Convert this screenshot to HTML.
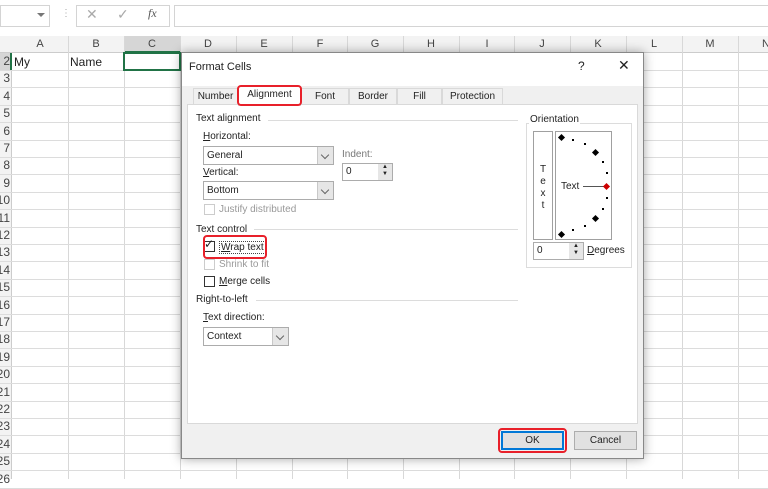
<!DOCTYPE html>
<html><head><style>
*{box-sizing:border-box;margin:0;padding:0}
body{width:768px;height:479px;overflow:hidden;background:#fff;font-family:"Liberation Sans",sans-serif;position:relative;font-size:11px;color:#222}
.a{position:absolute}
.vl{position:absolute;top:36px;bottom:0;width:1px;background:#d8d8d8}
.hl{position:absolute;left:0;right:0;height:1px;background:#dcdcdc}
.ch{position:absolute;top:36px;height:17px;font-size:11px;color:#444;text-align:center;line-height:17px}
.rh{position:absolute;left:0;width:11px;height:17px;font-size:12px;color:#444;overflow:hidden}
.rh span{position:absolute;right:1px;top:1px;white-space:nowrap}
.dlg{position:absolute;left:181px;top:52px;width:463px;height:407px;background:#f0f0f0;border:1px solid #888;box-shadow:0 0 10px rgba(0,0,0,.35)}
.t{font-size:10px;color:#222;position:absolute;white-space:nowrap}
.sel{position:absolute;background:#fff;border:1px solid #acacac;height:19px}
.arr{position:absolute;right:0;top:0;width:16px;height:17px;background:#e6e6e6;border-left:1px solid #c8c8c8}
.arr:after{content:"";position:absolute;left:4px;top:5px;width:5px;height:5px;border-right:1px solid #666;border-bottom:1px solid #666;transform:rotate(45deg)}
.cb{position:absolute;width:11px;height:11px;border:1px solid #333;background:#fff}
.sep{position:absolute;height:1px;background:#dcdcdc}
.tab{position:absolute;top:35px;height:17px;border:1px solid #d9d9d9;border-bottom:none;background:#f0f0f0;font-size:10px;text-align:center;line-height:16px}
.dot{position:absolute;width:2px;height:2px;background:#000}
.dia{position:absolute;width:5px;height:5px;background:#000;transform:rotate(45deg)}
</style></head><body>
<div class="a" style="left:0;top:0;width:768px;height:33px;background:#fff"></div>
<div class="a" style="left:0;top:5px;width:50px;height:22px;border:1px solid #d4d4d4;background:#fff"></div>
<div class="a" style="left:37px;top:13px;border:4px solid transparent;border-top:4px solid #777"></div>
<div class="a" style="left:61px;top:8px;color:#aaa;font-size:10px">⋮</div>
<div class="a" style="left:76px;top:5px;width:94px;height:22px;border:1px solid #d4d4d4"></div>
<div class="a" style="left:86px;top:6px;color:#aaa;font-size:14px">✕</div>
<div class="a" style="left:117px;top:6px;color:#aaa;font-size:14px">✓</div>
<div class="a" style="left:148px;top:6px;color:#555;font-size:12px;font-style:italic;font-family:'Liberation Serif',serif">fx</div>
<div class="a" style="left:174px;top:5px;width:600px;height:22px;border:1px solid #d4d4d4"></div>
<div class="a" style="left:0;top:36px;width:768px;height:17px;background:#f3f3f3;border-bottom:1px solid #ccc"></div>
<div class="a" style="left:124px;top:36px;width:56px;height:17px;background:#d6d6d6;border-bottom:2px solid #217346"></div>
<div class="a" style="left:0;top:53px;width:12px;height:426px;background:#f3f3f3;border-right:1px solid #ccc"></div>
<div class="a" style="left:0;top:53px;width:12px;height:17px;background:#d6d6d6;border-right:2px solid #217346"></div>
<div class="ch" style="left:12px;width:56px">A</div><div class="ch" style="left:68px;width:56px">B</div><div class="ch" style="left:124px;width:56px">C</div><div class="ch" style="left:180px;width:56px">D</div><div class="ch" style="left:236px;width:56px">E</div><div class="ch" style="left:292px;width:56px">F</div><div class="ch" style="left:347px;width:56px">G</div><div class="ch" style="left:403px;width:56px">H</div><div class="ch" style="left:459px;width:56px">I</div><div class="ch" style="left:514px;width:56px">J</div><div class="ch" style="left:570px;width:56px">K</div><div class="ch" style="left:626px;width:56px">L</div><div class="ch" style="left:682px;width:56px">M</div><div class="ch" style="left:738px;width:56px">N</div>
<div class="vl" style="left:68px"></div><div class="vl" style="left:124px"></div><div class="vl" style="left:180px"></div><div class="vl" style="left:236px"></div><div class="vl" style="left:292px"></div><div class="vl" style="left:347px"></div><div class="vl" style="left:403px"></div><div class="vl" style="left:459px"></div><div class="vl" style="left:514px"></div><div class="vl" style="left:570px"></div><div class="vl" style="left:626px"></div><div class="vl" style="left:682px"></div><div class="vl" style="left:738px"></div>
<div id="rows"></div>
<script>
var r='';for(var i=0;i<25;i++){var y=53+i*17.4;r+='<div class="hl" style="top:'+(y+17).toFixed(1)+'px"></div><div class="rh" style="top:'+(y).toFixed(1)+'px"><span>'+(i+2)+'</span></div>';}
document.getElementById('rows').innerHTML=r;
</script>
<div class="a" style="left:14px;top:55px;font-size:12px">My</div>
<div class="a" style="left:70px;top:55px;font-size:12px">Name</div>
<div class="a" style="left:123px;top:52px;width:58px;height:19px;border:2px solid #217346"></div>
<div class="dlg">
<div class="a" style="left:0;top:0;width:461px;height:33px;background:#fff"></div>
<div class="t" style="left:7px;top:8px;font-size:11px">Format Cells</div>
<div class="t" style="left:396px;top:6px;font-size:12px">?</div>
<div class="t" style="left:436px;top:4px;font-size:14px">✕</div>
<div class="tab" style="left:11px;width:45px">Number</div>
<div class="tab" style="left:56px;width:63px;top:33px;height:20px;background:#fff;z-index:2">Alignment</div>
<div class="tab" style="left:119px;width:48px">Font</div>
<div class="tab" style="left:167px;width:48px">Border</div>
<div class="tab" style="left:215px;width:45px">Fill</div>
<div class="tab" style="left:260px;width:61px">Protection</div>
<div class="a" style="left:55px;top:32px;width:65px;height:21px;border:2px solid #e8202a;border-radius:4px;z-index:3"></div>
<div class="a" style="left:5px;top:51px;width:451px;height:320px;background:#fff;border:1px solid #d9d9d9"></div>
<div class="t" style="left:14px;top:60px">Text alignment</div><div class="sep" style="left:86px;top:67px;width:250px"></div>
<div class="t" style="left:21px;top:78px"><u>H</u>orizontal:</div>
<div class="sel" style="left:21px;top:93px;width:131px"><span class="t" style="left:3px;top:3px">General</span><div class="arr"></div></div>
<div class="t" style="left:160px;top:96px;color:#777">Indent:</div>
<div class="sel" style="left:160px;top:110px;width:51px;height:18px"><span class="t" style="left:3px;top:2px">0</span><div class="a" style="right:0;top:0;width:14px;height:16px;background:#e6e6e6;font-size:6px;line-height:7px;text-align:center">▲<br>▼</div></div>
<div class="t" style="left:21px;top:114px"><u>V</u>ertical:</div>
<div class="sel" style="left:21px;top:128px;width:131px"><span class="t" style="left:3px;top:3px">Bottom</span><div class="arr"></div></div>
<div class="cb" style="left:22px;top:151px;border-color:#ccc"></div><div class="t" style="left:37px;top:151px;color:#999">Justify distributed</div>
<div class="t" style="left:14px;top:171px">Text control</div><div class="sep" style="left:72px;top:176px;width:264px"></div>
<div class="cb" style="left:22px;top:188px"></div><div class="t" style="left:22px;top:184px;font-size:12px">✓</div><div class="t" style="left:37px;top:188px;border:1px dotted #444;padding:0 1px"><u>W</u>rap text</div>
<div class="a" style="left:21px;top:182px;width:64px;height:24px;border:2px solid #e8202a;border-radius:4px"></div>
<div class="cb" style="left:22px;top:206px;border-color:#ccc"></div><div class="t" style="left:37px;top:206px;color:#999">Shrink to fit</div>
<div class="cb" style="left:22px;top:223px"></div><div class="t" style="left:37px;top:223px"><u>M</u>erge cells</div>
<div class="t" style="left:14px;top:241px">Right-to-left</div><div class="sep" style="left:74px;top:247px;width:262px"></div>
<div class="t" style="left:21px;top:259px"><u>T</u>ext direction:</div>
<div class="sel" style="left:21px;top:274px;width:86px"><span class="t" style="left:3px;top:3px">Context</span><div class="arr"></div></div>
<div class="a" style="left:344px;top:70px;width:106px;height:145px;border:1px solid #dcdcdc"></div>
<div class="t" style="left:347px;top:61px;background:#fff;padding:0 1px">Orientation</div>
<div class="a" style="left:351px;top:78px;width:20px;height:109px;border:1px solid #a0a0a0;font-size:10px;text-align:center;line-height:12px;padding-top:32px">T<br>e<br>x<br>t</div>
<div class="a" style="left:373px;top:78px;width:57px;height:109px;border:1px solid #a0a0a0"></div>
<div class="dia" style="left:377px;top:82px"></div><div class="dot" style="left:390px;top:86px"></div><div class="dot" style="left:402px;top:90px"></div><div class="dia" style="left:411px;top:97px"></div><div class="dot" style="left:420px;top:108px"></div><div class="dot" style="left:424px;top:119px"></div>
<div class="t" style="left:379px;top:128px">Text</div><div class="a" style="left:401px;top:133px;width:21px;height:1px;background:#555"></div><div class="dia" style="left:422px;top:131px;background:#c00"></div>
<div class="dot" style="left:424px;top:144px"></div><div class="dot" style="left:420px;top:155px"></div><div class="dia" style="left:411px;top:163px"></div><div class="dot" style="left:402px;top:172px"></div><div class="dot" style="left:390px;top:176px"></div><div class="dia" style="left:377px;top:179px"></div>
<div class="sel" style="left:351px;top:189px;width:51px;height:18px"><span class="t" style="left:3px;top:2px">0</span><div class="a" style="right:0;top:0;width:14px;height:16px;background:#e6e6e6;font-size:6px;line-height:7px;text-align:center">▲<br>▼</div></div>
<div class="t" style="left:405px;top:192px"><u>D</u>egrees</div>
<div class="a" style="left:319px;top:378px;width:63px;height:19px;background:#e1e1e1;border:2px solid #0078d7;text-align:center;line-height:15px;font-size:10px">OK</div>
<div class="a" style="left:316px;top:375px;width:69px;height:25px;border:2px solid #e8202a;border-radius:4px"></div>
<div class="a" style="left:392px;top:378px;width:63px;height:19px;background:#e1e1e1;border:1px solid #adadad;text-align:center;line-height:17px;font-size:10px">Cancel</div>
</div>
</body></html>
